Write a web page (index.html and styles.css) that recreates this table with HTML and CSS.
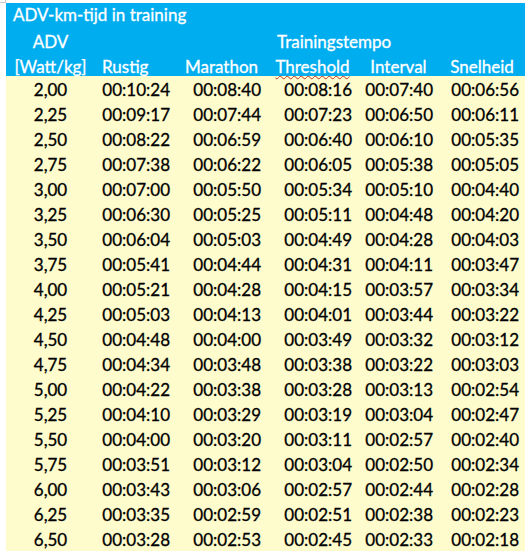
FILE: index.html
```html
<!DOCTYPE html>
<html lang="nl">
<head>
<meta charset="utf-8">
<title>ADV-km-tijd in training</title>
<link rel="stylesheet" href="styles.css">
</head>
<body>
<div class="sheet">
  <div class="head">
    <div class="title">ADV-km-tijd in training</div>
    <div class="row row-a">
      <div class="c1">ADV</div><div></div><div></div>
      <div class="tempo">Trainingstempo</div><div></div><div></div>
    </div>
    <div class="row row-b">
      <div class="c1">[Watt/kg]</div>
      <div class="h-left">Rustig</div>
      <div class="h-mid">Marathon</div>
      <div class="h-mid"><span class="spell">Threshold</span></div>
      <div class="h-mid">Interval</div>
      <div class="h-mid">Snelheid</div>
    </div>
  </div>
  <div class="body">
    <div class="row"><div class="c1">2,00</div><div>00:10:24</div><div>00:08:40</div><div>00:08:16</div><div>00:07:40</div><div>00:06:56</div></div>
    <div class="row"><div class="c1">2,25</div><div>00:09:17</div><div>00:07:44</div><div>00:07:23</div><div>00:06:50</div><div>00:06:11</div></div>
    <div class="row"><div class="c1">2,50</div><div>00:08:22</div><div>00:06:59</div><div>00:06:40</div><div>00:06:10</div><div>00:05:35</div></div>
    <div class="row"><div class="c1">2,75</div><div>00:07:38</div><div>00:06:22</div><div>00:06:05</div><div>00:05:38</div><div>00:05:05</div></div>
    <div class="row"><div class="c1">3,00</div><div>00:07:00</div><div>00:05:50</div><div>00:05:34</div><div>00:05:10</div><div>00:04:40</div></div>
    <div class="row"><div class="c1">3,25</div><div>00:06:30</div><div>00:05:25</div><div>00:05:11</div><div>00:04:48</div><div>00:04:20</div></div>
    <div class="row"><div class="c1">3,50</div><div>00:06:04</div><div>00:05:03</div><div>00:04:49</div><div>00:04:28</div><div>00:04:03</div></div>
    <div class="row"><div class="c1">3,75</div><div>00:05:41</div><div>00:04:44</div><div>00:04:31</div><div>00:04:11</div><div>00:03:47</div></div>
    <div class="row"><div class="c1">4,00</div><div>00:05:21</div><div>00:04:28</div><div>00:04:15</div><div>00:03:57</div><div>00:03:34</div></div>
    <div class="row"><div class="c1">4,25</div><div>00:05:03</div><div>00:04:13</div><div>00:04:01</div><div>00:03:44</div><div>00:03:22</div></div>
    <div class="row"><div class="c1">4,50</div><div>00:04:48</div><div>00:04:00</div><div>00:03:49</div><div>00:03:32</div><div>00:03:12</div></div>
    <div class="row"><div class="c1">4,75</div><div>00:04:34</div><div>00:03:48</div><div>00:03:38</div><div>00:03:22</div><div>00:03:03</div></div>
    <div class="row"><div class="c1">5,00</div><div>00:04:22</div><div>00:03:38</div><div>00:03:28</div><div>00:03:13</div><div>00:02:54</div></div>
    <div class="row"><div class="c1">5,25</div><div>00:04:10</div><div>00:03:29</div><div>00:03:19</div><div>00:03:04</div><div>00:02:47</div></div>
    <div class="row"><div class="c1">5,50</div><div>00:04:00</div><div>00:03:20</div><div>00:03:11</div><div>00:02:57</div><div>00:02:40</div></div>
    <div class="row"><div class="c1">5,75</div><div>00:03:51</div><div>00:03:12</div><div>00:03:04</div><div>00:02:50</div><div>00:02:34</div></div>
    <div class="row"><div class="c1">6,00</div><div>00:03:43</div><div>00:03:06</div><div>00:02:57</div><div>00:02:44</div><div>00:02:28</div></div>
    <div class="row"><div class="c1">6,25</div><div>00:03:35</div><div>00:02:59</div><div>00:02:51</div><div>00:02:38</div><div>00:02:23</div></div>
    <div class="row"><div class="c1">6,50</div><div>00:03:28</div><div>00:02:53</div><div>00:02:45</div><div>00:02:33</div><div>00:02:18</div></div>
  </div>
</div>
</body>
</html>
```
FILE: styles.css
```css
html, body {
  margin: 0;
  padding: 0;
  background: #ffffff;
}
body {
  font-family: Lato, "Open Sans", sans-serif;
  font-size: 17px;
  -webkit-text-stroke: 0.3px currentColor;
}
.sheet {
  position: relative;
  padding: 3px 0 0 6px;
  width: 519px;
}
.sheet::before {
  content: "";
  position: absolute;
  left: 0;
  top: 0;
  width: 5px;
  height: 2px;
  border-right: 1px solid #c8c8c8;
  border-bottom: 1px solid #c8c8c8;
}
.head {
  background: #00adef;
  color: #ffffff;
}
.body {
  background: #fefbcc;
  color: #000000;
}
.title {
  height: 24px;
  line-height: 24px;
  padding-left: 7px;
}
.row {
  display: grid;
  grid-template-columns: 89px 81px 91px 91px 81px 86px;
  box-sizing: border-box;
  height: 25px;
  padding-top: 2px;
  line-height: 23px;
}
.head .row-a {
  height: 24px;
  padding-top: 4px;
  line-height: 22px;
}
.head .row-b {
  height: 25px;
  padding-top: 5px;
  line-height: 22px;
}
.body .row > div {
  text-align: right;
  padding-right: 6px;
}
.body .row > div.c1 {
  text-align: center;
  padding-right: 0;
}
.head .c1 {
  text-align: center;
}
.tempo {
  padding-left: 10px;
  white-space: nowrap;
}
.h-left {
  padding-left: 7px;
}
.h-mid {
  text-align: center;
}
.spell {
  text-decoration: underline wavy #c0302a;
  text-decoration-thickness: 1px;
  text-underline-offset: 2px;
}
```
